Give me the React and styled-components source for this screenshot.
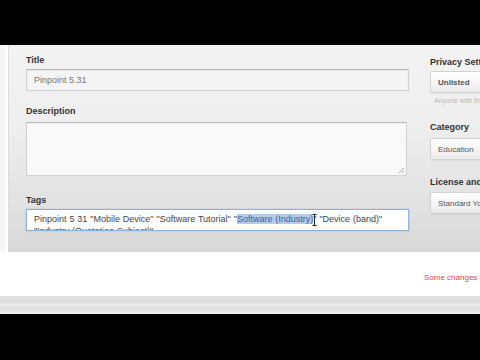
import React from "react";
import styled, { createGlobalStyle } from "styled-components";

const Global = createGlobalStyle`
  html, body {
    margin: 0;
    padding: 0;
    background: #000;
    overflow: hidden;
  }
  body {
    width: 480px;
    height: 360px;
    font-family: "Liberation Sans", Arial, sans-serif;
  }
`;

const Screen = styled.div`
  width: 480px;
  height: 360px;
  display: flex;
  flex-direction: column;
  background: #000;
  overflow: hidden;
`;

const Letterbox = styled.div`
  height: ${p => p.h}px;
  flex: none;
  background: #000;
`;

const Page = styled.div`
  display: flex;
  flex-direction: column;
  background: #fff;
  flex: none;
`;

const Main = styled.div`
  display: flex;
  height: 207px;
`;

const Gutter = styled.div`
  width: 8px;
  flex: none;
  background: linear-gradient(90deg, #fafafa 0, #f2f2f2 3px, #fbfbfb 5px, #fff 8px);
`;

const Panel = styled.div`
  flex: 1;
  display: flex;
  gap: 21px;
  padding: 10px 0 0 17px;
  border-left: 1px solid #dcdcdc;
  background: linear-gradient(180deg, #f3f3f3 0%, #eeeeee 40%, #e1e1e1 80%, #d7d7d7 100%);
  min-width: 0;
`;

const LeftCol = styled.div`
  width: 383px;
  flex: none;
  display: flex;
  flex-direction: column;
`;

const RightCol = styled.div`
  width: 140px;
  flex: none;
  display: flex;
  flex-direction: column;
  padding-top: 2px;
`;

const Label = styled.div`
  font-size: 9px;
  line-height: 11px;
  font-weight: bold;
  color: #333;
  white-space: nowrap;
  margin-top: ${p => p.top || 0}px;
  margin-bottom: ${p => p.bottom || 3}px;
`;

const TextBox = styled.div`
  box-sizing: border-box;
  height: 22px;
  padding: 0 7px;
  display: flex;
  align-items: center;
  font-size: 9px;
  color: #777;
  background: #f5f5f5;
  border: 1px solid #d0d0d0;
  border-top-color: #b9b9b9;
  box-shadow: inset 0 1px 1px rgba(0, 0, 0, 0.08);
`;

const TextArea = styled.div`
  position: relative;
  box-sizing: border-box;
  width: 381px;
  height: 54px;
  background: #f9f9f9;
  border: 1px solid #d0d0d0;
  border-top-color: #bdbdbd;
  box-shadow: inset 0 1px 1px rgba(0, 0, 0, 0.06);
`;

const Grip = styled.svg`
  position: absolute;
  right: 1px;
  bottom: 1px;
`;

const TagsBox = styled.div`
  position: relative;
  box-sizing: border-box;
  height: 22px;
  padding: 3px 7px 0;
  font-size: 9px;
  line-height: 12px;
  color: #444;
  background: #fff;
  border: 1px solid #8fb2d9;
  box-shadow: 0 0 2px rgba(90, 140, 210, 0.35);
  overflow: hidden;
  word-spacing: 0.4px;
`;

const Selected = styled.span`
  background: #b7cbe6;
  color: #3e5f9a;
`;

const Cursor = styled.svg`
  position: absolute;
  left: 285px;
  top: 4px;
`;

const SelectButton = styled.div`
  box-sizing: border-box;
  height: 22px;
  display: flex;
  align-items: center;
  padding-left: 7px;
  font-size: 8px;
  font-weight: ${p => (p.bold ? "bold" : "normal")};
  color: #555;
  white-space: nowrap;
  background: linear-gradient(180deg, #ffffff 0%, #f4f4f4 60%, #e9e9e9 100%);
  border: 1px solid #d2d2d2;
  border-radius: 2px;
  box-shadow: 0 1px 1px rgba(0, 0, 0, 0.06);
`;

const Hint = styled.div`
  font-size: 7px;
  line-height: 9px;
  color: #b8b8b8;
  padding: 3px 0 0 4px;
  white-space: nowrap;
`;

const Footer = styled.div`
  height: 44px;
  display: flex;
  align-items: center;
  padding: 6px 0 0 424px;
  box-sizing: border-box;
  background: #fff;
`;

const Warning = styled.span`
  font-size: 8px;
  color: #e04a4a;
  white-space: nowrap;
`;

const BottomBar = styled.div`
  height: 18px;
  background: linear-gradient(180deg, #e3e3e3 0, #dcdcdc 6px, #ececec 8px, #e0e0e0 12px, #f0f0f0 18px);
`;

const Field = ({ label, top, bottom, children }) => (
  <>
    <Label top={top} bottom={bottom}>{label}</Label>
    {children}
  </>
);

export default function App() {
  return (
    <Screen>
      <Global />
      <Letterbox h={45} />
      <Page>
        <Main>
          <Gutter />
          <Panel>
            <LeftCol>
              <Field label="Title">
                <TextBox>Pinpoint 5.31</TextBox>
              </Field>
              <Field label="Description" top={15} bottom={5}>
                <TextArea>
                  <Grip width="8" height="8" viewBox="0 0 8 8">
                    <path d="M7 2 L2 7 M7 5 L5 7" stroke="#aaa" strokeWidth="1" />
                  </Grip>
                </TextArea>
              </Field>
              <Field label="Tags" top={19}>
                <TagsBox>
                  Pinpoint 5 31 "Mobile Device" "Software Tutorial" "<Selected>Software (Industry)</Selected>" "Device (band)" "Industry (Quotation Subject)"
                  <Cursor width="5" height="12" viewBox="0 0 5 12">
                    <path d="M0.5 0.5 H4.5 M2.5 0.5 V11.5 M0.5 11.5 H4.5" stroke="#222" strokeWidth="1" fill="none" />
                  </Cursor>
                </TagsBox>
              </Field>
            </LeftCol>
            <RightCol>
              <Field label="Privacy Settings">
                <SelectButton bold>Unlisted</SelectButton>
              </Field>
              <Hint>Anyone with the link can view</Hint>
              <Field label="Category" top={17} bottom={5}>
                <SelectButton>Education</SelectButton>
              </Field>
              <Field label="License and rights ownership" top={17} bottom={4}>
                <SelectButton>Standard YouTube License</SelectButton>
              </Field>
            </RightCol>
          </Panel>
        </Main>
        <Footer>
          <Warning>Some changes are not yet saved.</Warning>
        </Footer>
        <BottomBar />
      </Page>
      <Letterbox h={46} />
    </Screen>
  );
}
